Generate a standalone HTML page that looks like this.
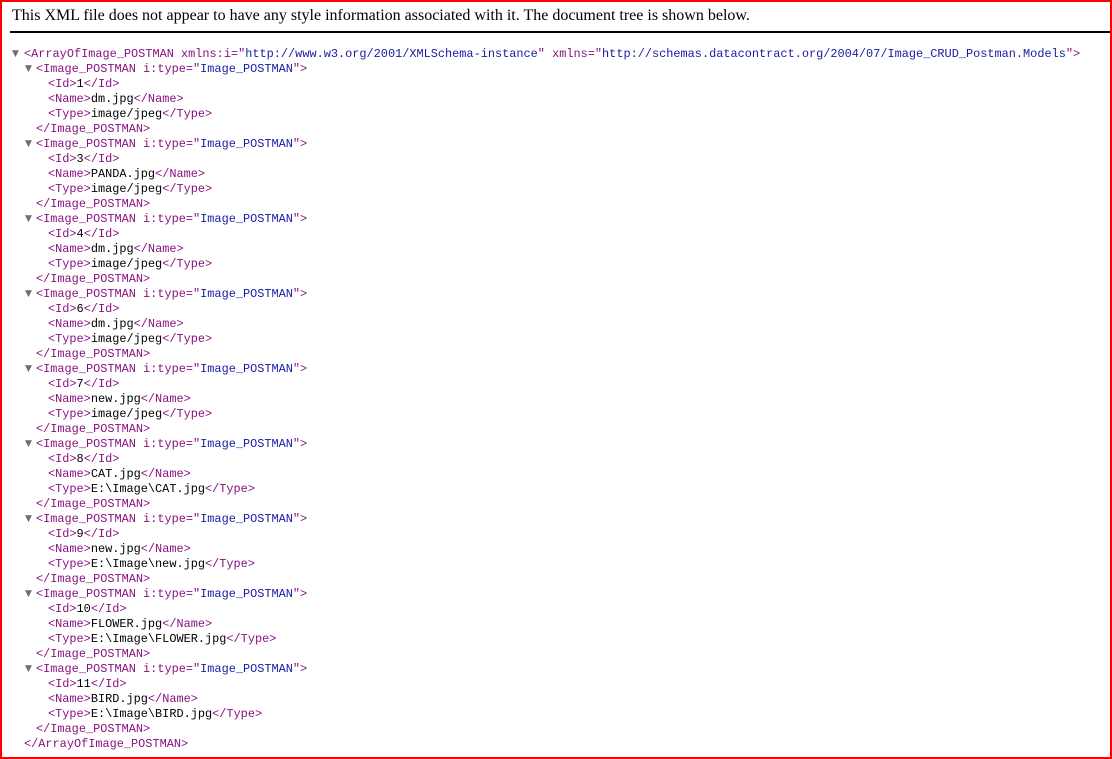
<!DOCTYPE html>
<html><head><style>
html,body{margin:0;padding:0;background:#fff}
body{width:1112px;height:759px;position:relative;overflow:hidden}
.frame{position:absolute;left:0;top:0;width:1108px;height:755px;border:2px solid #f00}
.hdr{position:absolute;left:12px;top:7px;font:16px "Liberation Serif",serif;color:#000;white-space:nowrap}
.rule{position:absolute;left:10px;top:31px;width:1100px;height:2px;background:#000}
.tree{position:absolute;left:0;top:47px;width:1100px;font:11.9px/15px "Liberation Mono",monospace}
.l{height:15px;position:relative;white-space:pre}
.l>span{position:absolute;top:0}
.t{color:#881280}.a{color:#881280}.v{color:#1a1aa6}
.ar{color:#6e6e6e;font-size:9px;font-family:"DejaVu Sans",sans-serif}
</style></head><body>
<div class="frame"></div>
<div class="hdr">This XML file does not appear to have any style information associated with it. The document tree is shown below.</div>
<div class="rule"></div>
<div class="tree" id="tree"></div>
<script>
var d=[["1","dm.jpg","image/jpeg"],["3","PANDA.jpg","image/jpeg"],["4","dm.jpg","image/jpeg"],["6","dm.jpg","image/jpeg"],["7","new.jpg","image/jpeg"],["8","CAT.jpg","E:\\Image\\CAT.jpg"],["9","new.jpg","E:\\Image\\new.jpg"],["10","FLOWER.jpg","E:\\Image\\FLOWER.jpg"],["11","BIRD.jpg","E:\\Image\\BIRD.jpg"]];
function e(s){return s.replace(/&/g,"&amp;").replace(/</g,"&lt;")}
var h='<div class="l"><span class="ar" style="left:12px">▼</span><span style="left:24px"><span class="t">&lt;ArrayOfImage_POSTMAN</span> <span class="a">xmlns:i</span><span class="t">="</span><span class="v">http://www.w3.org/2001/XMLSchema-instance</span><span class="t">"</span> <span class="a">xmlns</span><span class="t">="</span><span class="v">http://schemas.datacontract.org/2004/07/Image_CRUD_Postman.Models</span><span class="t">"&gt;</span></span></div>';
d.forEach(function(r){
h+='<div class="l"><span class="ar" style="left:25px">▼</span><span style="left:36px"><span class="t">&lt;Image_POSTMAN</span> <span class="a">i:type</span><span class="t">="</span><span class="v">Image_POSTMAN</span><span class="t">"&gt;</span></span></div>';
[["Id",r[0]],["Name",r[1]],["Type",r[2]]].forEach(function(f){
h+='<div class="l"><span style="left:48px"><span class="t">&lt;'+f[0]+'&gt;</span>'+e(f[1])+'<span class="t">&lt;/'+f[0]+'&gt;</span></span></div>';});
h+='<div class="l"><span style="left:36px" class="t">&lt;/Image_POSTMAN&gt;</span></div>';
});
h+='<div class="l"><span style="left:24px" class="t">&lt;/ArrayOfImage_POSTMAN&gt;</span></div>';
document.getElementById("tree").innerHTML=h;
</script>
</body></html>
